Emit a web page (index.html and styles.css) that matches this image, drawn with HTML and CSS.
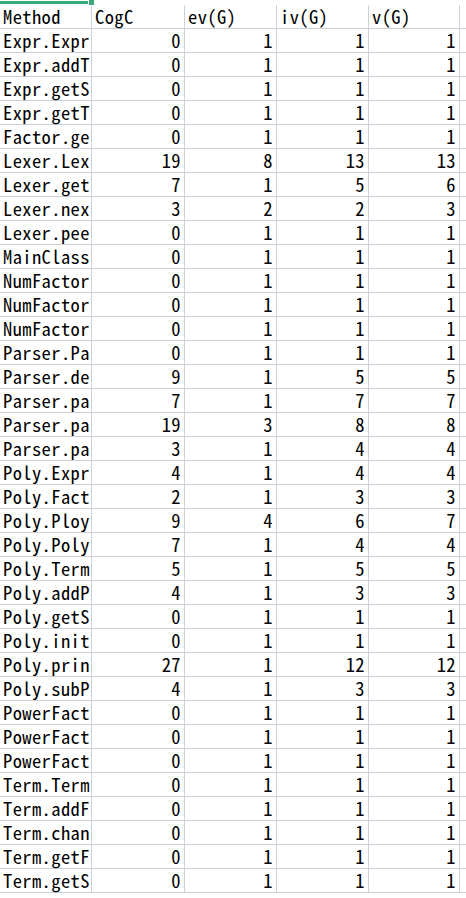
FILE: index.html
```html
<!DOCTYPE html>
<html>
<head>
<meta charset="utf-8">
<link rel="stylesheet" href="styles.css">
</head>
<body>
<div class="sheet">
  <div class="strip"><div class="sel"><span class="handle"></span></div></div>
  <div class="row"><div class="c t">Method</div><div class="c t">CogC</div><div class="c t">ev(G)</div><div class="c t">iv(G)</div><div class="c t">v(G)</div><div class="c e"></div></div>
  <div class="row"><div class="c t">Expr.Expr</div><div class="c n">0</div><div class="c n">1</div><div class="c n">1</div><div class="c n">1</div><div class="c e"></div></div>
  <div class="row"><div class="c t">Expr.addT</div><div class="c n">0</div><div class="c n">1</div><div class="c n">1</div><div class="c n">1</div><div class="c e"></div></div>
  <div class="row"><div class="c t">Expr.getS</div><div class="c n">0</div><div class="c n">1</div><div class="c n">1</div><div class="c n">1</div><div class="c e"></div></div>
  <div class="row"><div class="c t">Expr.getT</div><div class="c n">0</div><div class="c n">1</div><div class="c n">1</div><div class="c n">1</div><div class="c e"></div></div>
  <div class="row"><div class="c t">Factor.ge</div><div class="c n">0</div><div class="c n">1</div><div class="c n">1</div><div class="c n">1</div><div class="c e"></div></div>
  <div class="row"><div class="c t">Lexer.Lex</div><div class="c n">19</div><div class="c n">8</div><div class="c n">13</div><div class="c n">13</div><div class="c e"></div></div>
  <div class="row"><div class="c t">Lexer.get</div><div class="c n">7</div><div class="c n">1</div><div class="c n">5</div><div class="c n">6</div><div class="c e"></div></div>
  <div class="row"><div class="c t">Lexer.nex</div><div class="c n">3</div><div class="c n">2</div><div class="c n">2</div><div class="c n">3</div><div class="c e"></div></div>
  <div class="row"><div class="c t">Lexer.pee</div><div class="c n">0</div><div class="c n">1</div><div class="c n">1</div><div class="c n">1</div><div class="c e"></div></div>
  <div class="row"><div class="c t">MainClass</div><div class="c n">0</div><div class="c n">1</div><div class="c n">1</div><div class="c n">1</div><div class="c e"></div></div>
  <div class="row"><div class="c t">NumFactor</div><div class="c n">0</div><div class="c n">1</div><div class="c n">1</div><div class="c n">1</div><div class="c e"></div></div>
  <div class="row"><div class="c t">NumFactor</div><div class="c n">0</div><div class="c n">1</div><div class="c n">1</div><div class="c n">1</div><div class="c e"></div></div>
  <div class="row"><div class="c t">NumFactor</div><div class="c n">0</div><div class="c n">1</div><div class="c n">1</div><div class="c n">1</div><div class="c e"></div></div>
  <div class="row"><div class="c t">Parser.Pa</div><div class="c n">0</div><div class="c n">1</div><div class="c n">1</div><div class="c n">1</div><div class="c e"></div></div>
  <div class="row"><div class="c t">Parser.de</div><div class="c n">9</div><div class="c n">1</div><div class="c n">5</div><div class="c n">5</div><div class="c e"></div></div>
  <div class="row"><div class="c t">Parser.pa</div><div class="c n">7</div><div class="c n">1</div><div class="c n">7</div><div class="c n">7</div><div class="c e"></div></div>
  <div class="row"><div class="c t">Parser.pa</div><div class="c n">19</div><div class="c n">3</div><div class="c n">8</div><div class="c n">8</div><div class="c e"></div></div>
  <div class="row"><div class="c t">Parser.pa</div><div class="c n">3</div><div class="c n">1</div><div class="c n">4</div><div class="c n">4</div><div class="c e"></div></div>
  <div class="row"><div class="c t">Poly.Expr</div><div class="c n">4</div><div class="c n">1</div><div class="c n">4</div><div class="c n">4</div><div class="c e"></div></div>
  <div class="row"><div class="c t">Poly.Fact</div><div class="c n">2</div><div class="c n">1</div><div class="c n">3</div><div class="c n">3</div><div class="c e"></div></div>
  <div class="row"><div class="c t">Poly.Ploy</div><div class="c n">9</div><div class="c n">4</div><div class="c n">6</div><div class="c n">7</div><div class="c e"></div></div>
  <div class="row"><div class="c t">Poly.Poly</div><div class="c n">7</div><div class="c n">1</div><div class="c n">4</div><div class="c n">4</div><div class="c e"></div></div>
  <div class="row"><div class="c t">Poly.Term</div><div class="c n">5</div><div class="c n">1</div><div class="c n">5</div><div class="c n">5</div><div class="c e"></div></div>
  <div class="row"><div class="c t">Poly.addP</div><div class="c n">4</div><div class="c n">1</div><div class="c n">3</div><div class="c n">3</div><div class="c e"></div></div>
  <div class="row"><div class="c t">Poly.getS</div><div class="c n">0</div><div class="c n">1</div><div class="c n">1</div><div class="c n">1</div><div class="c e"></div></div>
  <div class="row"><div class="c t">Poly.init</div><div class="c n">0</div><div class="c n">1</div><div class="c n">1</div><div class="c n">1</div><div class="c e"></div></div>
  <div class="row"><div class="c t">Poly.prin</div><div class="c n">27</div><div class="c n">1</div><div class="c n">12</div><div class="c n">12</div><div class="c e"></div></div>
  <div class="row"><div class="c t">Poly.subP</div><div class="c n">4</div><div class="c n">1</div><div class="c n">3</div><div class="c n">3</div><div class="c e"></div></div>
  <div class="row"><div class="c t">PowerFact</div><div class="c n">0</div><div class="c n">1</div><div class="c n">1</div><div class="c n">1</div><div class="c e"></div></div>
  <div class="row"><div class="c t">PowerFact</div><div class="c n">0</div><div class="c n">1</div><div class="c n">1</div><div class="c n">1</div><div class="c e"></div></div>
  <div class="row"><div class="c t">PowerFact</div><div class="c n">0</div><div class="c n">1</div><div class="c n">1</div><div class="c n">1</div><div class="c e"></div></div>
  <div class="row"><div class="c t">Term.Term</div><div class="c n">0</div><div class="c n">1</div><div class="c n">1</div><div class="c n">1</div><div class="c e"></div></div>
  <div class="row"><div class="c t">Term.addF</div><div class="c n">0</div><div class="c n">1</div><div class="c n">1</div><div class="c n">1</div><div class="c e"></div></div>
  <div class="row"><div class="c t">Term.chan</div><div class="c n">0</div><div class="c n">1</div><div class="c n">1</div><div class="c n">1</div><div class="c e"></div></div>
  <div class="row"><div class="c t">Term.getF</div><div class="c n">0</div><div class="c n">1</div><div class="c n">1</div><div class="c n">1</div><div class="c e"></div></div>
  <div class="row"><div class="c t">Term.getS</div><div class="c n">0</div><div class="c n">1</div><div class="c n">1</div><div class="c n">1</div><div class="c e"></div></div>
</div>
</body>
</html>
```

FILE: styles.css
```css
html, body {
  margin: 0;
  padding: 0;
  background: #ffffff;
}

.sheet {
  width: 466px;
  overflow: hidden;
  font-family: "Noto Sans Mono CJK SC", "Liberation Mono", monospace;
  font-size: 18.5px;
  font-weight: 300;
  letter-spacing: 0.4px;
  color: #000000;
}

.strip {
  height: 5px;
  display: flex;
  align-items: flex-start;
}

.sel {
  position: relative;
  width: 91px;
  height: 3px;
  margin-top: 1px;
  background: #3aa879;
}

.handle {
  position: absolute;
  right: -4px;
  top: -2px;
  width: 5px;
  height: 5px;
  background: #3aa879;
  border: 1px solid #ffffff;
}

.row {
  display: grid;
  grid-template-columns: 92px 93px 92px 92px 91px 1fr;
  height: 24px;
  box-sizing: border-box;
  border-bottom: 1px solid #cbcfd8;
}

.c {
  box-sizing: border-box;
  border-right: 1px solid #cbcfd8;
  height: 23px;
  line-height: 23px;
  white-space: nowrap;
}

.t {
  padding-left: 3px;
  text-align: left;
}

.n {
  padding-right: 3px;
  text-align: right;
}

.e {
  border-right: none;
}
```
